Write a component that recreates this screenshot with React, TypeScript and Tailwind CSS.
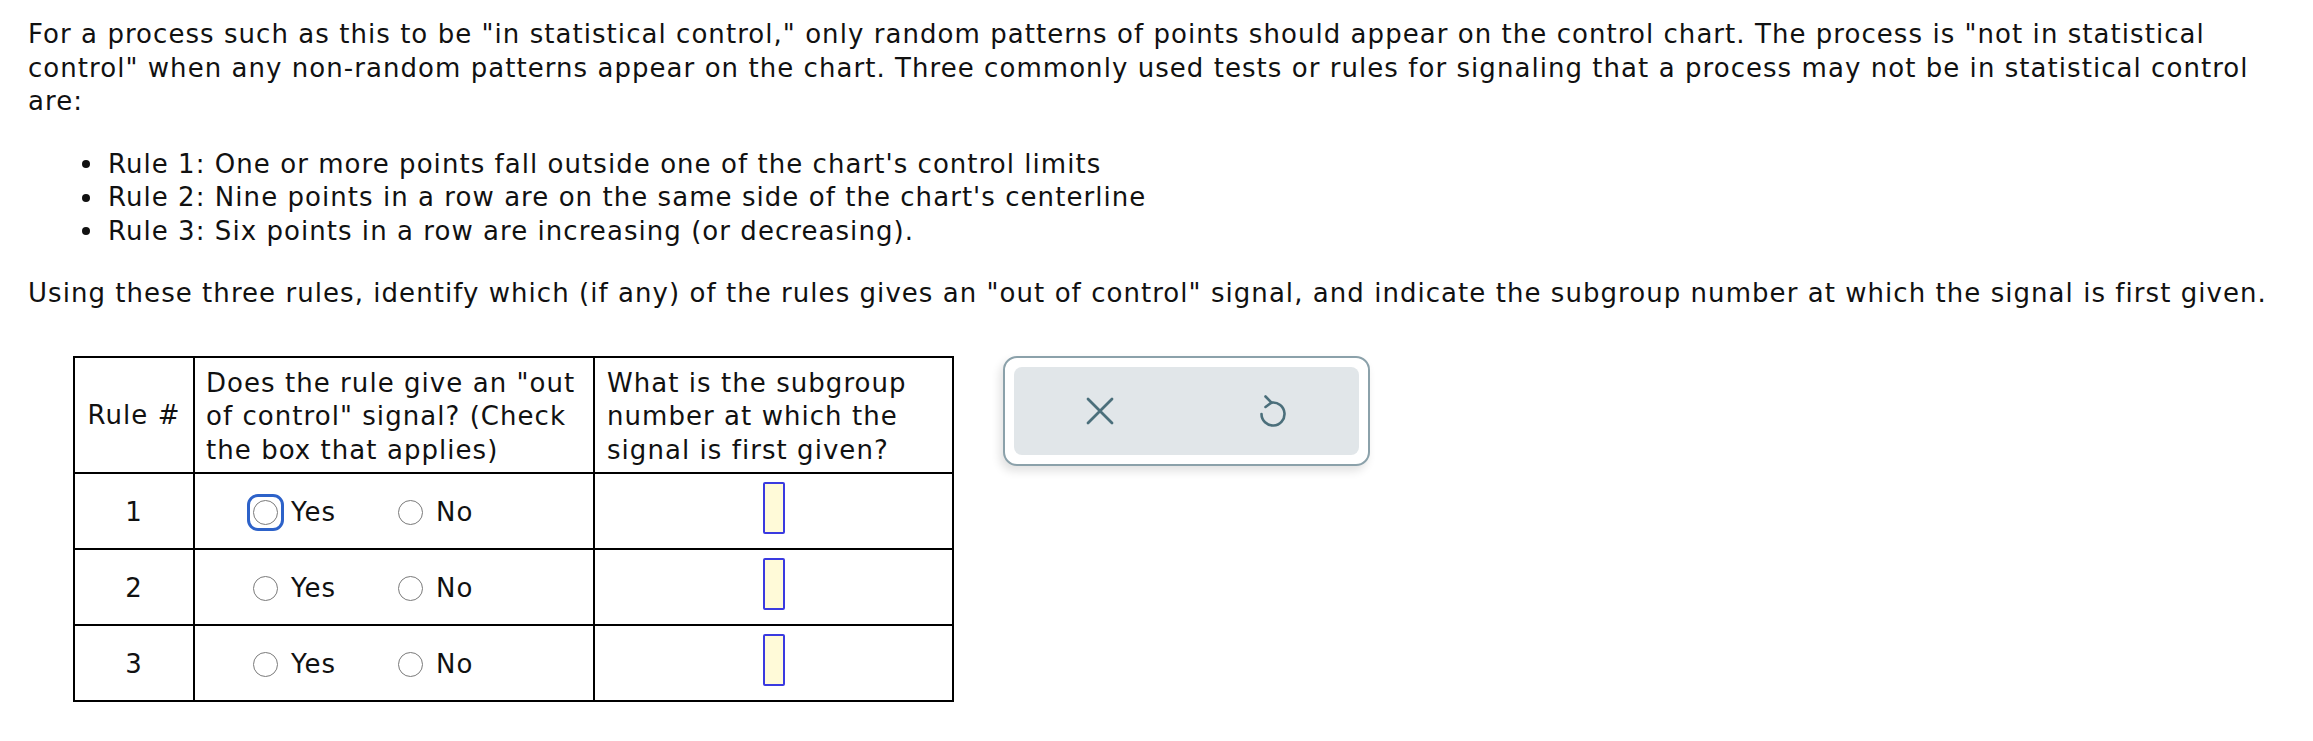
import React from "react";

function Radio({ focused = false }: { focused?: boolean }) {
  return (
    <div className="relative w-[25px] h-[25px] shrink-0">
      {focused && (
        <div className="absolute -inset-[6px] rounded-[11px] border-[3.5px] border-[#2d62c9]" />
      )}
      <div className="w-[25px] h-[25px] rounded-full border-[1.6px] border-[#7a7a7a] bg-white" />
    </div>
  );
}

function Option({ label, focused = false, width }: { label: string; focused?: boolean; width?: string }) {
  return (
    <div className={`flex items-center gap-[13px] ${width ?? ""}`}>
      <Radio focused={focused} />
      <span>{label}</span>
    </div>
  );
}

function AnswerBox() {
  return <div className="w-[22px] h-[52px] rounded-[2px] border-2 border-[#3a3ae0] bg-[#fffad8]" />;
}

function Row({ n, focused = false }: { n: string; focused?: boolean }) {
  return (
    <>
      <div className="h-[76px] border-r-2 border-b-2 border-black flex items-center justify-center pt-[4px]">
        {n}
      </div>
      <div className="h-[76px] border-r-2 border-b-2 border-black flex items-center pl-[58px] pt-[4px]">
        <Option label="Yes" focused={focused} width="w-[145px]" />
        <Option label="No" />
      </div>
      <div className="h-[76px] border-r-2 border-b-2 border-black flex items-center justify-center pb-[6px]">
        <AnswerBox />
      </div>
    </>
  );
}

function XIcon() {
  return (
    <svg width="28" height="28" viewBox="0 0 28 28" fill="none">
      <path d="M2 2 L26 26 M26 2 L2 26" stroke="#4b6f7b" strokeWidth="2.8" strokeLinecap="round" />
    </svg>
  );
}

function UndoIcon() {
  return (
    <svg width="28" height="34" viewBox="0 0 28 34" fill="none">
      <path
        d="M2.5 20 A11.5 11.5 0 1 0 12.5 8.6"
        stroke="#4b6f7b"
        strokeWidth="2.6"
        strokeLinecap="round"
      />
      <path d="M6.5 2.5 L12.5 8.6 L6.5 13" stroke="#4b6f7b" strokeWidth="2.6" strokeLinecap="round" strokeLinejoin="round" />
    </svg>
  );
}

export default function App() {
  return (
    <div
      className="bg-white text-[#111] text-[26px] tracking-[1.05px] leading-[33.5px] pt-[18px] pl-[28px] pr-[20px] pb-[40px]"
      style={{ fontFamily: '"DejaVu Sans", Verdana, sans-serif' }}
    >
      <p className="whitespace-nowrap">
        For a process such as this to be "in statistical control," only random patterns of points should appear on the control chart. The process is "not in statistical
        <br />
        control" when any non-random patterns appear on the chart. Three commonly used tests or rules for signaling that a process may not be in statistical control
        <br />
        are:
      </p>
      <ul className="mt-[29px] pl-[54px] whitespace-nowrap">
        <li className="flex items-center gap-[18px]">
          <span className="w-[8px] h-[8px] rounded-full bg-[#111] shrink-0" />
          <span>Rule 1: One or more points fall outside one of the chart's control limits</span>
        </li>
        <li className="flex items-center gap-[18px]">
          <span className="w-[8px] h-[8px] rounded-full bg-[#111] shrink-0" />
          <span>Rule 2: Nine points in a row are on the same side of the chart's centerline</span>
        </li>
        <li className="flex items-center gap-[18px]">
          <span className="w-[8px] h-[8px] rounded-full bg-[#111] shrink-0" />
          <span>Rule 3: Six points in a row are increasing (or decreasing).</span>
        </li>
      </ul>
      <p className="mt-[29px] whitespace-nowrap">
        Using these three rules, identify which (if any) of the rules gives an "out of control" signal, and indicate the subgroup number at which the signal is first given.
      </p>

      <div className="mt-[45px] flex items-start gap-[49px] ml-[45px]">
        <div className="grid grid-cols-[120px_400px_359px] border-l-2 border-t-2 border-black">
          <div className="h-[116px] border-r-2 border-b-2 border-black flex items-center justify-center pt-[3px]">
            Rule #
          </div>
          <div className="h-[116px] border-r-2 border-b-2 border-black pl-[11px] pt-[9px] whitespace-nowrap">
            Does the rule give an "out
            <br />
            of control" signal? (Check
            <br />
            the box that applies)
          </div>
          <div className="h-[116px] border-r-2 border-b-2 border-black pl-[12px] pt-[9px] whitespace-nowrap">
            What is the subgroup
            <br />
            number at which the
            <br />
            signal is first given?
          </div>
          <Row n="1" focused />
          <Row n="2" />
          <Row n="3" />
        </div>

        <div className="w-[367px] h-[110px] rounded-[14px] border-2 border-[#8ba1aa] bg-white p-[9px] shadow-[-3px_5px_10px_rgba(0,0,0,0.12)]">
          <div className="w-full h-full rounded-[8px] bg-[#e1e6e9] flex">
            <button className="flex-1 flex items-center justify-center">
              <XIcon />
            </button>
            <button className="flex-1 flex items-center justify-center">
              <UndoIcon />
            </button>
          </div>
        </div>
      </div>
    </div>
  );
}
